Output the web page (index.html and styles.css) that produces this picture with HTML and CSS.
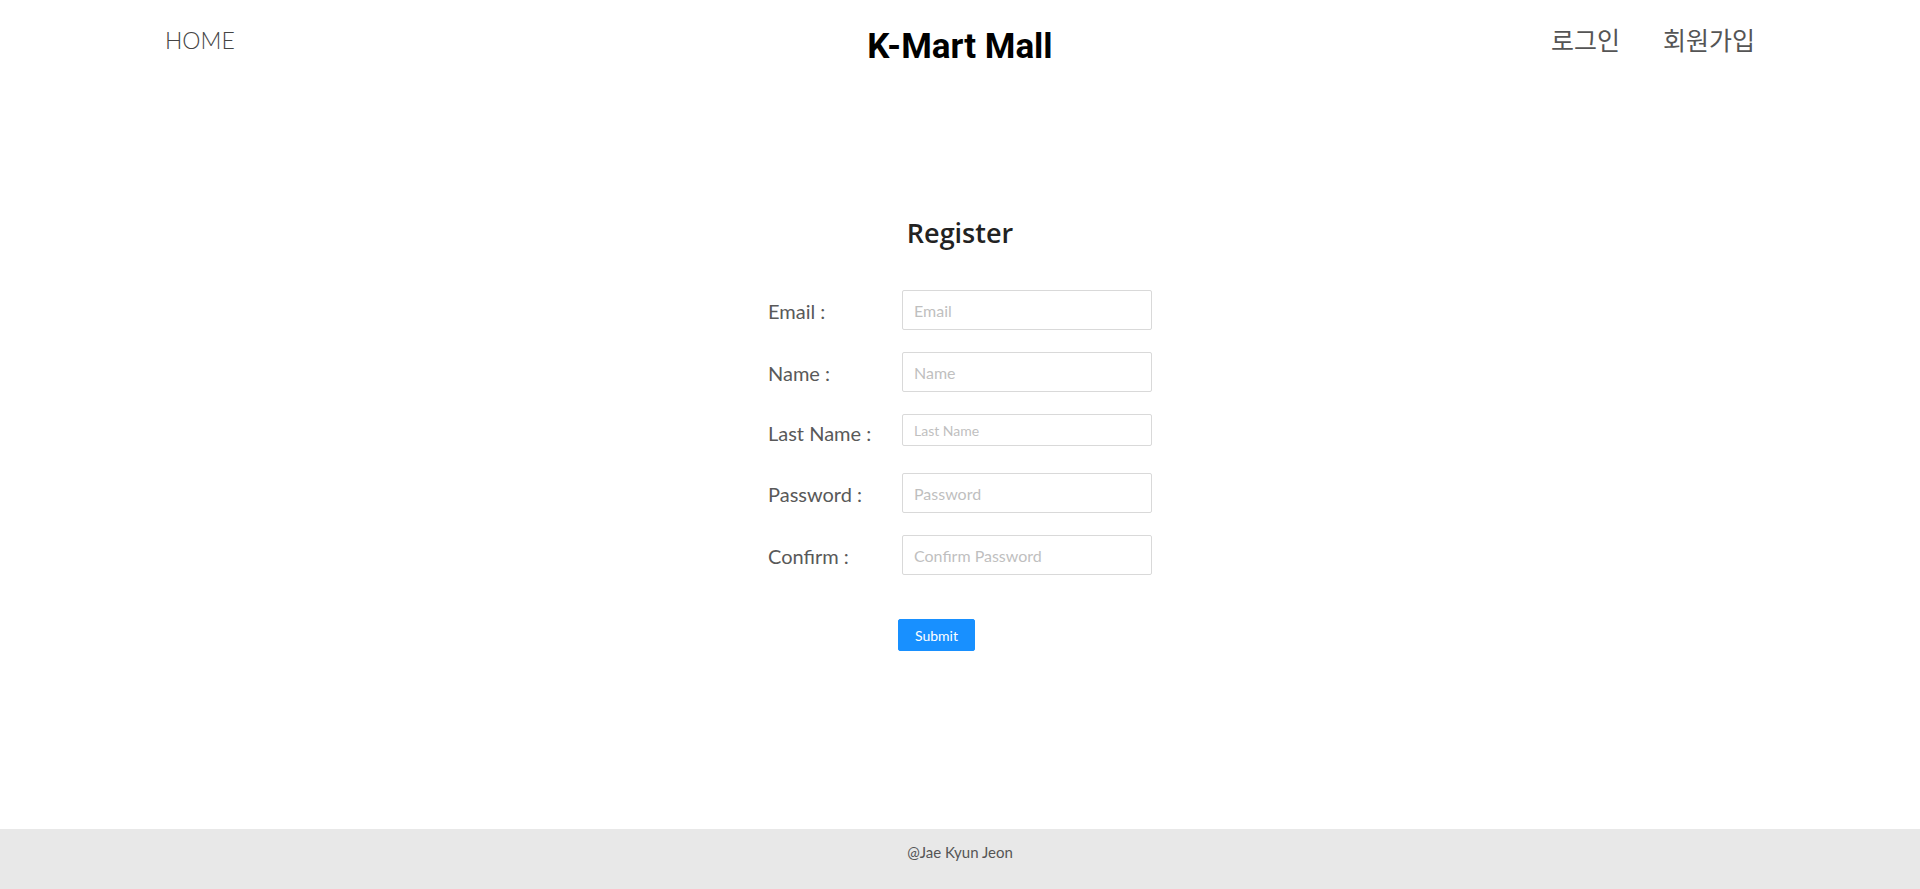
FILE: index.html
```html
<!DOCTYPE html>
<html lang="ko">
<head>
  <meta charset="UTF-8">
  <meta name="viewport" content="width=device-width, initial-scale=1.0">
  <title>K-Mart Mall</title>
  <link rel="stylesheet" href="styles.css">
</head>
<body>
  <!-- Header -->
  <div class="header">
    <div class="nav-left">
      <a href="#">HOME</a>
    </div>
    <div class="logo">K-Mart Mall</div>
    <div class="nav-right">
      <a href="#">로그인</a>
      <a href="#">회원가입</a>
    </div>
  </div>

  <!-- Register Form -->
  <div class="main-content">
    <h2 class="title">Register</h2>
    <form class="register-form">
      <div class="form-row">
        <label>Email :</label>
        <input type="email" placeholder="Email">
      </div>
      <div class="form-row">
        <label>Name :</label>
        <input type="text" placeholder="Name">
      </div>
      <div class="form-row">
        <label>Last Name :</label>
        <input type="text" class="small" placeholder="Last Name">
      </div>
      <div class="form-row">
        <label>Password :</label>
        <input type="password" placeholder="Password">
      </div>
      <div class="form-row">
        <label>Confirm :</label>
        <input type="password" placeholder="Confirm Password">
      </div>
      <button type="button" class="submit-btn">Submit</button>
    </form>
  </div>

  <!-- Footer -->
  <div class="footer">@Jae Kyun Jeon</div>
</body>
</html>
```

FILE: styles.css
```css
/* General Reset */
* {
  margin: 0;
  padding: 0;
  box-sizing: border-box;
}

body {
  display: flex;
  flex-direction: column;
  min-height: 100vh;
  background-color: #fff;
  font-family: Lato, "Noto Sans CJK KR", sans-serif;
}

a {
  text-decoration: none;
}

/* Header */
.header {
  display: grid;
  grid-template-columns: 1fr auto 1fr;
  align-items: start;
  height: 80px;
  padding: 21px 165px 0;
}

.nav-left a {
  display: inline-block;
  margin-top: 3px;
  font-size: 23px;
  font-weight: 300;
  line-height: 32px;
  color: #444;
}

.logo {
  margin-top: 5px;
  font-family: Roboto, sans-serif;
  font-size: 35px;
  font-weight: 700;
  line-height: 42px;
  color: #000;
}

.nav-right {
  display: flex;
  justify-content: flex-end;
  gap: 43px;
  margin-top: 2px;
}

.nav-right a {
  font-family: "Noto Sans CJK KR", sans-serif;
  font-size: 25px;
  line-height: 32px;
  color: #555;
}

/* Main Content */
.main-content {
  flex: 1;
  display: flex;
  flex-direction: column;
  align-items: center;
  padding-top: 135px;
}

.title {
  font-family: "Open Sans", sans-serif;
  font-size: 27px;
  font-weight: 600;
  line-height: 36px;
  color: #222;
  margin-bottom: 39px;
}

.register-form {
  width: 384px;
}

.form-row {
  display: flex;
  align-items: center;
  margin-bottom: 22px;
}

.form-row label {
  width: 134px;
  margin-top: 2px;
  font-size: 20px;
  line-height: 35px;
  color: #595959;
}

.form-row input {
  align-self: flex-start;
  width: 250px;
  height: 40px;
  padding: 4px 11px;
  border: 1px solid #d9d9d9;
  border-radius: 2px;
  font-family: Lato, sans-serif;
  font-size: 16px;
  color: #333;
  outline: none;
}

.form-row input.small {
  height: 32px;
  font-size: 14px;
}

.form-row input::placeholder {
  color: #bfbfbf;
}

.submit-btn {
  margin: 22px 0 0 130px;
  height: 32px;
  padding: 0 16px;
  border: 1px solid #1890ff;
  border-radius: 2px;
  background-color: #1890ff;
  color: #fff;
  font-family: Lato, sans-serif;
  font-size: 14px;
  cursor: pointer;
}

/* Footer */
.footer {
  height: 60px;
  padding-top: 13px;
  background-color: #e8e8e8;
  text-align: center;
  font-size: 15px;
  line-height: 20px;
  color: #555;
}
```
